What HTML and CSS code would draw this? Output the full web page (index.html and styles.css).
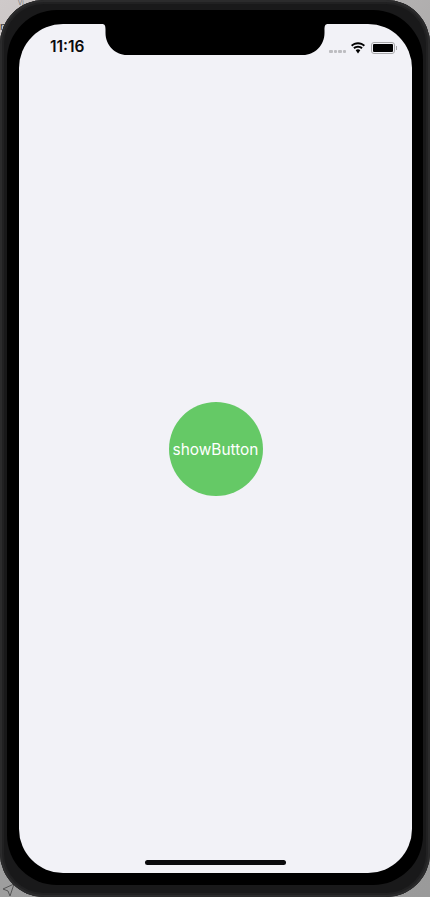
FILE: index.html
```html
<!DOCTYPE html>
<html lang="en">

<head>
    <title>showButton</title>
    <meta charset="utf-8" />
    <link rel="stylesheet" href="styles.css">
</head>
<body>

    <!-- desktop showing behind the simulator -->
    <span id="deskTitle">Vi</span>
    <span id="deskLabel">na</span>
    <svg id="deskCursor" width="14" height="14" viewBox="0 0 14 14">
        <path d="M12 1L1 6L6 8L8 13Z" fill="none" stroke="#555555" stroke-width="1" />
    </svg>

    <div id="deviceFrame">
        <div id="bezel">
            <div id="screen">

                <div id="statusBar">
                    <div id="statusLeft">
                        <span id="clock">11:16</span>
                    </div>
                    <svg id="notch" width="226" height="31" viewBox="0 0 226 31">
                        <path d="M0 0H226C223 0 222.500 2 222.500 6V9C222.500 21 213 31 201 31H25C13 31 3.500 21 3.500 9V6C3.500 2 3 0 0 0Z" fill="#000000" />
                    </svg>
                    <div id="statusRight">
                        <div class="signalDots">
                            <i></i><i></i><i></i><i></i>
                        </div>
                        <svg class="wifiIcon" width="16" height="12" viewBox="0 0 16 12">
                            <path d="M8 2.300C10.200 2.300 12.200 3.100 13.700 4.500L15 3.100C13.100 1.300 10.700 .2 8 .2S2.900 1.300 1 3.100L2.300 4.500C3.800 3.100 5.800 2.300 8 2.300Z" />
                            <path d="M8 5.700C9.300 5.700 10.500 6.200 11.400 7L12.700 5.600C11.400 4.400 9.800 3.700 8 3.700S4.600 4.400 3.300 5.600L4.600 7C5.500 6.200 6.700 5.700 8 5.700Z" />
                            <path d="M8 7.300C7.100 7.300 6.300 7.700 5.700 8.200L8 11.600L10.300 8.200C9.700 7.700 8.900 7.300 8 7.300Z" />
                        </svg>
                        <div class="battery">
                            <div class="batteryFill"></div>
                        </div>
                        <div class="batteryCap"></div>
                    </div>
                </div>

                <div id="centerContent">
                    <button id="showButton" type="button">showButton</button>
                </div>

                <div id="homeArea">
                    <div id="homeIndicator"></div>
                </div>

            </div>
        </div>
    </div>

</body>
</html>
```

FILE: styles.css
```css
html, body {
    width: 100%;
    height: 100%;
    margin: 0;
    padding: 0;
    overflow: hidden;
}

body {
    position: relative;
    background: linear-gradient(135deg, #cfcaca 0%, #a0a0a0 50%, #9a9a9a 100%);
    font-family: Inter, "Liberation Sans", Arial, sans-serif;
}

#deskTitle {
    position: absolute;
    top: 0;
    left: 18px;
    color: #777777;
    font-size: 6px;
    line-height: 6px;
}

#deskLabel {
    position: absolute;
    top: 20px;
    left: 0;
    color: #333333;
    font-size: 10px;
}

#deskCursor {
    position: absolute;
    top: 883px;
    left: 2px;
}

#deviceFrame {
    position: relative;
    box-sizing: border-box;
    height: 100%;
    padding: 10px 7px 12px 7px;
    border-radius: 44px;
    background-color: #19191a;
    box-shadow: inset 0 0 0 2px #2b2b2c, inset 0 0 0 4px #212122;
}

#bezel {
    box-sizing: border-box;
    height: 100%;
    padding: 14px 11px 12px 12px;
    border-radius: 50px;
    background-color: #000000;
}

#screen {
    display: flex;
    flex-direction: column;
    height: 100%;
    overflow: hidden;
    border-radius: 44px;
    background-color: #f2f2f7;
}

#statusBar {
    display: flex;
    height: 31px;
}

#statusLeft {
    box-sizing: border-box;
    flex: 0 0 83px;
    padding: 14px 0 0 31px;
}

#clock {
    display: block;
    color: #0a0a0c;
    font-size: 15.500px;
    font-weight: 600;
    line-height: 18px;
}

#notch {
    flex: none;
}

#statusRight {
    box-sizing: border-box;
    flex: 1;
    display: flex;
    align-items: flex-start;
    padding: 18px 0 0 1px;
}

.signalDots {
    display: flex;
    gap: 1px;
    margin-top: 8px;
}

.signalDots i {
    display: block;
    width: 3.500px;
    height: 3px;
    border-radius: 1px;
    background-color: #bdbdc1;
}

.wifiIcon {
    margin-left: 4px;
    fill: #000000;
}

.battery {
    box-sizing: border-box;
    width: 24px;
    height: 12px;
    margin-left: 5px;
    padding: 1px;
    border: 1px solid #a8a8ab;
    border-radius: 3px;
}

.batteryFill {
    height: 100%;
    border-radius: 1px;
    background-color: #000000;
}

.batteryCap {
    width: 1px;
    height: 4px;
    margin: 4px 0 0 1px;
    background-color: #a8a8ab;
}

#centerContent {
    flex: 1;
    display: flex;
    align-items: center;
    justify-content: center;
}

#showButton {
    width: 94px;
    height: 94px;
    padding: 1px 0 0 0;
    border: none;
    border-radius: 50%;
    background-color: #65c966;
    color: #ffffff;
    font-family: Inter, "Liberation Sans", Arial, sans-serif;
    font-size: 15.400px;
    white-space: nowrap;
}

#homeArea {
    display: flex;
    justify-content: center;
    height: 31px;
}

#homeIndicator {
    width: 141px;
    height: 5px;
    margin-top: 18px;
    border-radius: 3px;
    background-color: #0a0a0c;
}
```
